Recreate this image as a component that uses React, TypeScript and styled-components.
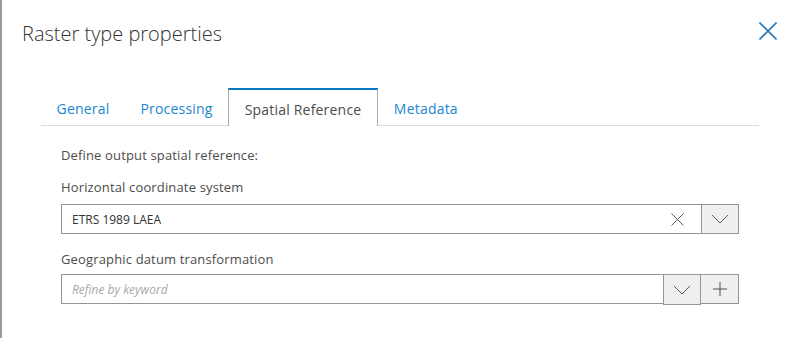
import React from 'react';
import styled, { createGlobalStyle } from 'styled-components';

const GlobalStyle = createGlobalStyle`
  html, body {
    margin: 0;
    padding: 0;
    background: #fff;
  }
  body {
    font-family: "Open Sans", Lato, sans-serif;
    color: #4c4c4c;
  }
`;

const Dialog = styled.div`
  box-sizing: border-box;
  height: 338px;
  border-left: 2px solid #999;
  display: flex;
  flex-direction: column;
`;

const Header = styled.div`
  display: flex;
  justify-content: space-between;
  align-items: flex-start;
  padding: 20px 20px 0 20px;
  height: 88px;
  box-sizing: border-box;
`;

const Title = styled.h1`
  margin: 0;
  font-size: 20px;
  font-weight: 300;
  color: #323232;
  line-height: 28px;
`;

const CloseButton = styled.button`
  border: none;
  background: none;
  padding: 0;
  margin-top: 2px;
  width: 18px;
  height: 18px;
  cursor: pointer;
  display: flex;
`;

const TabBar = styled.div`
  display: flex;
  align-items: flex-start;
  margin: 0 38px 0 39px;
  border-bottom: 1px solid #ddd;
  height: 37px;
`;

const Tab = styled.div<{ $active?: boolean }>`
  box-sizing: border-box;
  height: ${({ $active }) => ($active ? '38px' : '37px')};
  display: flex;
  align-items: center;
  padding: ${({ $active }) => ($active ? '2px 16px 0 15.5px' : '2px 14.5px 1px')};
  font-size: 14px;
  letter-spacing: 0.2px;
  color: ${({ $active }) => ($active ? '#4c4c4c' : '#1b87d0')};
  background: #fff;
  border-top: 2px solid ${({ $active }) => ($active ? '#0079c1' : 'transparent')};
  border-left: 1px solid ${({ $active }) => ($active ? '#a9a9a9' : 'transparent')};
  border-right: 1px solid ${({ $active }) => ($active ? '#a9a9a9' : 'transparent')};
`;

const Body = styled.div`
  padding: 20px 58px 0 59px;
  display: flex;
  flex-direction: column;
`;

const Intro = styled.div`
  font-size: 13px;
  line-height: 18px;
  letter-spacing: 0.15px;
  margin-bottom: 14px;
`;

const Label = styled.div<{ $gap?: number }>`
  font-size: 13px;
  line-height: 18px;
  letter-spacing: 0.15px;
  margin-bottom: ${({ $gap = 8 }) => $gap}px;
`;

const Field = styled.div`
  display: flex;
  height: 30px;
  margin-bottom: 16px;
`;

const InputBox = styled.div`
  flex: 1;
  box-sizing: border-box;
  border: 1px solid #959595;
  display: flex;
  align-items: center;
  padding: 0 10px;
  font-size: 12px;
  color: #323232;
`;

const Value = styled.span`
  flex: 1;
`;

const Placeholder = styled.span`
  flex: 1;
  font-style: italic;
  color: #a8a8a8;
`;

const ClearIcon = styled.span`
  display: flex;
  margin-right: 7px;
`;

const IconButton = styled.button<{ $tall?: boolean }>`
  box-sizing: border-box;
  width: 38px;
  height: ${({ $tall }) => ($tall ? '31px' : '30px')};
  border: 1px solid #959595;
  border-left: none;
  background: #efefef;
  padding: 0;
  display: flex;
  align-items: center;
  justify-content: center;
`;

const FirstButton = styled(IconButton)`
  border-left: 1px solid #959595;
  margin-left: -1px;
`;

const Chevron = () => (
  <svg width="18" height="10" viewBox="0 0 18 10">
    <path d="M1 1 L9 9 L17 1" fill="none" stroke="#595959" strokeWidth="1" />
  </svg>
);

const Plus = () => (
  <svg width="14" height="14" viewBox="0 0 14 14">
    <path d="M7 0 V14 M0 7 H14" fill="none" stroke="#4c4c4c" strokeWidth="1" />
  </svg>
);

const Cross = ({ size, color, width }: { size: number; color: string; width: number }) => (
  <svg width={size} height={size} viewBox={`0 0 ${size} ${size}`}>
    <path
      d={`M0.5 0.5 L${size - 0.5} ${size - 0.5} M${size - 0.5} 0.5 L0.5 ${size - 0.5}`}
      fill="none"
      stroke={color}
      strokeWidth={width}
    />
  </svg>
);

const tabs = ['General', 'Processing', 'Spatial Reference', 'Metadata'];

const App: React.FC = () => (
  <>
    <GlobalStyle />
    <Dialog>
      <Header>
        <Title>Raster type properties</Title>
        <CloseButton aria-label="Close">
          <Cross size={18} color="#2b7bb9" width={1.6} />
        </CloseButton>
      </Header>
      <TabBar>
        {tabs.map((t) => (
          <Tab key={t} $active={t === 'Spatial Reference'}>
            {t}
          </Tab>
        ))}
      </TabBar>
      <Body>
        <Intro>Define output spatial reference:</Intro>
        <Label>Horizontal coordinate system</Label>
        <Field>
          <InputBox>
            <Value>ETRS 1989 LAEA</Value>
            <ClearIcon>
              <Cross size={13} color="#595959" width={1} />
            </ClearIcon>
          </InputBox>
          <FirstButton>
            <Chevron />
          </FirstButton>
        </Field>
        <Label $gap={6}>Geographic datum transformation</Label>
        <Field>
          <InputBox>
            <Placeholder>Refine by keyword</Placeholder>
          </InputBox>
          <FirstButton $tall>
            <Chevron />
          </FirstButton>
          <IconButton>
            <Plus />
          </IconButton>
        </Field>
      </Body>
    </Dialog>
  </>
);

export default App;
